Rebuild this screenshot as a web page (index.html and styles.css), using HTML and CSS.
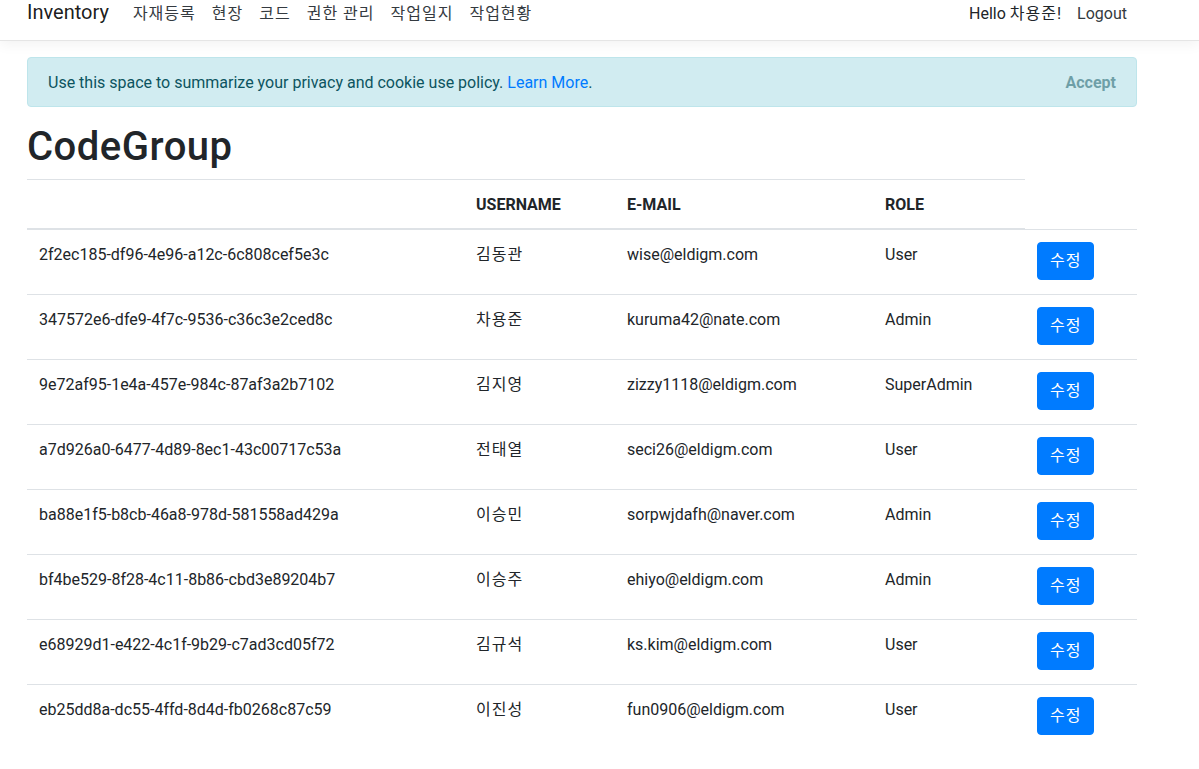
FILE: index.html
```html
<!DOCTYPE html>
<html lang="ko">
<head>
  <meta charset="UTF-8" />
  <meta name="viewport" content="width=device-width, initial-scale=1.0"/>
  <title>CodeGroup - Inventory</title>
  <link rel="stylesheet" href="styles.css">
</head>
<body>
  <header class="navbar">
    <div class="container nav-inner">
      <a class="brand" href="#">Inventory</a>
      <ul class="nav-links">
        <li><a href="#">자재등록</a></li>
        <li><a href="#">현장</a></li>
        <li><a href="#">코드</a></li>
        <li><a href="#">권한 관리</a></li>
        <li><a href="#">작업일지</a></li>
        <li><a href="#">작업현황</a></li>
      </ul>
      <ul class="nav-user">
        <li><span class="hello">Hello <span class="ko">차용준</span>!</span></li>
        <li><a href="#">Logout</a></li>
      </ul>
    </div>
  </header>

  <div class="container">
    <div class="cookie-alert">
      <span>Use this space to summarize your privacy and cookie use policy. <a href="#">Learn More</a>.</span>
      <button class="accept-btn" type="button">Accept</button>
    </div>

    <h1 class="page-title">CodeGroup</h1>

    <table class="user-table">
      <colgroup>
        <col class="col-id">
        <col class="col-name">
        <col class="col-mail">
        <col class="col-role">
        <col class="col-action">
      </colgroup>
      <thead>
        <tr>
          <th></th>
          <th>USERNAME</th>
          <th>E-MAIL</th>
          <th>ROLE</th>
        </tr>
      </thead>
      <tbody>
        <tr>
          <td>2f2ec185-df96-4e96-a12c-6c808cef5e3c</td>
          <td class="ko">김동관</td>
          <td>wise@eldigm.com</td>
          <td>User</td>
          <td class="action"><button class="edit-btn" type="button">수정</button></td>
        </tr>
        <tr>
          <td>347572e6-dfe9-4f7c-9536-c36c3e2ced8c</td>
          <td class="ko">차용준</td>
          <td>kuruma42@nate.com</td>
          <td>Admin</td>
          <td class="action"><button class="edit-btn" type="button">수정</button></td>
        </tr>
        <tr>
          <td>9e72af95-1e4a-457e-984c-87af3a2b7102</td>
          <td class="ko">김지영</td>
          <td>zizzy1118@eldigm.com</td>
          <td>SuperAdmin</td>
          <td class="action"><button class="edit-btn" type="button">수정</button></td>
        </tr>
        <tr>
          <td>a7d926a0-6477-4d89-8ec1-43c00717c53a</td>
          <td class="ko">전태열</td>
          <td>seci26@eldigm.com</td>
          <td>User</td>
          <td class="action"><button class="edit-btn" type="button">수정</button></td>
        </tr>
        <tr>
          <td>ba88e1f5-b8cb-46a8-978d-581558ad429a</td>
          <td class="ko">이승민</td>
          <td>sorpwjdafh@naver.com</td>
          <td>Admin</td>
          <td class="action"><button class="edit-btn" type="button">수정</button></td>
        </tr>
        <tr>
          <td>bf4be529-8f28-4c11-8b86-cbd3e89204b7</td>
          <td class="ko">이승주</td>
          <td>ehiyo@eldigm.com</td>
          <td>Admin</td>
          <td class="action"><button class="edit-btn" type="button">수정</button></td>
        </tr>
        <tr>
          <td>e68929d1-e422-4c1f-9b29-c7ad3cd05f72</td>
          <td class="ko">김규석</td>
          <td>ks.kim@eldigm.com</td>
          <td>User</td>
          <td class="action"><button class="edit-btn" type="button">수정</button></td>
        </tr>
        <tr>
          <td>eb25dd8a-dc55-4ffd-8d4d-fb0268c87c59</td>
          <td class="ko">이진성</td>
          <td>fun0906@eldigm.com</td>
          <td>User</td>
          <td class="action"><button class="edit-btn" type="button">수정</button></td>
        </tr>
      </tbody>
    </table>
  </div>
</body>
</html>
```

FILE: styles.css
```css
body {
  margin: 0;
  font-family: Roboto, "Noto Sans CJK KR", sans-serif;
  font-size: 16px;
  line-height: 1.5;
  color: #212529;
  background: #fff;
}

a {
  text-decoration: none;
}

ul {
  list-style: none;
  margin: 0;
  padding: 0;
}

.container {
  width: 1110px;
  margin-left: 27px;
}

/* hangul in Noto CJK runs a bit narrower than Malgun Gothic */
.ko {
  letter-spacing: 1px;
}

/* top navigation */
.navbar {
  height: 40px;
  border-bottom: 1px solid #e5e5e5;
  box-shadow: 0 4px 12px rgba(0, 0, 0, 0.05);
  margin-bottom: 16px;
}

.nav-inner {
  display: flex;
  align-items: baseline;
}

.brand {
  font-size: 20px;
  line-height: 24px;
  color: rgba(0, 0, 0, 0.9);
  margin-right: 16px;
}

.nav-links,
.nav-user {
  display: flex;
  align-items: baseline;
}

.nav-links {
  flex: 1;
}

.nav-links a,
.nav-user a,
.hello {
  display: block;
  padding: 0 8px;
  line-height: 24px;
  color: #343a40;
}

.nav-links a {
  letter-spacing: 1px;
}

.nav-user {
  margin-right: 2px;
}

.hello {
  color: #212529;
}

/* cookie consent */
.cookie-alert {
  display: flex;
  justify-content: space-between;
  align-items: center;
  padding: 13px 20px 11px;
  margin-bottom: 16px;
  background: #d1ecf1;
  border: 1px solid #bee5eb;
  border-radius: 4px;
  color: #0c5460;
}

.cookie-alert a {
  color: #007bff;
}

.accept-btn {
  padding: 0;
  border: none;
  background: transparent;
  font-family: inherit;
  font-size: 16px;
  font-weight: 700;
  line-height: 24px;
  color: #0c5460;
  opacity: 0.5;
  cursor: pointer;
}

.page-title {
  font-size: 40px;
  font-weight: 500;
  line-height: 1.2;
  letter-spacing: 0.5px;
  margin: 0 0 8px;
}

/* users table */
.user-table {
  width: 100%;
  border-collapse: collapse;
  margin-bottom: 16px;
}

.col-id { width: 437px; }
.col-name { width: 151px; }
.col-mail { width: 258px; }
.col-role { width: 152px; }
.col-action { width: 112px; }

.user-table th,
.user-table td {
  padding: 13px 12px 11px;
  text-align: left;
  vertical-align: top;
  border-top: 1px solid #dee2e6;
}

.user-table th {
  font-weight: 700;
  vertical-align: bottom;
  border-bottom: 2px solid #dee2e6;
}

.user-table td.action {
  padding-top: 12px;
  padding-bottom: 14px;
}

.edit-btn {
  display: inline-block;
  padding: 6px 12px;
  border: 1px solid #007bff;
  border-radius: 4px;
  background: #007bff;
  color: #fff;
  font-family: inherit;
  font-size: 16px;
  line-height: 24px;
  letter-spacing: 1px;
  cursor: pointer;
}
```
